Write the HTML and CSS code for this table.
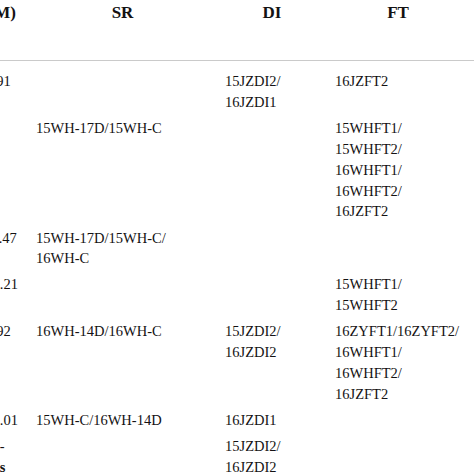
FILE: index.html
```html
<!DOCTYPE html>
<html>
<head>
<meta charset="utf-8">
<link rel="stylesheet" href="styles.css">
</head>
<body>
<div class="table">
  <div class="row head">
    <div class="cell">(cM)</div>
    <div class="cell">SR</div>
    <div class="cell">DI</div>
    <div class="cell">FT</div>
  </div>
  <div class="tbody">
    <div class="row">
      <div class="cell">52.91</div>
      <div class="cell"></div>
      <div class="cell">15JZDI2/<br>16JZDI1</div>
      <div class="cell">16JZFT2</div>
    </div>
    <div class="row">
      <div class="cell"></div>
      <div class="cell">15WH-17D/15WH-C</div>
      <div class="cell"></div>
      <div class="cell">15WHFT1/<br>15WHFT2/<br>16WHFT1/<br>16WHFT2/<br>16JZFT2</div>
    </div>
    <div class="row">
      <div class="cell">111.47</div>
      <div class="cell">15WH-17D/15WH-C/<br>16WH-C</div>
      <div class="cell"></div>
      <div class="cell"></div>
    </div>
    <div class="row">
      <div class="cell">107.21</div>
      <div class="cell"></div>
      <div class="cell"></div>
      <div class="cell">15WHFT1/<br>15WHFT2</div>
    </div>
    <div class="row">
      <div class="cell">64.92</div>
      <div class="cell">16WH-14D/16WH-C</div>
      <div class="cell">15JZDI2/<br>16JZDI2</div>
      <div class="cell">16ZYFT1/16ZYFT2/<br>16WHFT1/<br>16WHFT2/<br>16JZFT2</div>
    </div>
    <div class="row">
      <div class="cell">120.01</div>
      <div class="cell">15WH-C/16WH-14D</div>
      <div class="cell">16JZDI1</div>
      <div class="cell"></div>
    </div>
    <div class="row">
      <div class="cell">125-<br>100<b>s</b></div>
      <div class="cell"></div>
      <div class="cell">15JZDI2/<br>16JZDI2</div>
      <div class="cell"></div>
    </div>
  </div>
</div>
</body>
</html>
```
FILE: styles.css
```css
html, body {
  margin: 0;
  padding: 0;
  background: #ffffff;
  overflow: hidden;
}

body {
  width: 474px;
  height: 474px;
  font-family: "Liberation Serif", "Times New Roman", serif;
  color: #141213;
}

.table {
  margin-left: -23px;
  width: 497px;
}

.row {
  display: grid;
  grid-template-columns: 43px 173px 94px 126px;
  column-gap: 16px;
}

.head {
  box-sizing: border-box;
  height: 60.5px;
  padding-top: 3px;
  font-weight: bold;
  font-size: 17px;
  line-height: 20px;
  text-align: center;
  border-bottom: 1.5px solid #cacaca;
}

.tbody {
  padding-top: 8px;
  font-size: 14.5px;
  line-height: 20.8px;
}

.tbody .row {
  padding: 2.7px 0;
}

.tbody .cell {
  white-space: nowrap;
}

.tbody .row > .cell:first-child {
  padding-left: 1px;
}
```
